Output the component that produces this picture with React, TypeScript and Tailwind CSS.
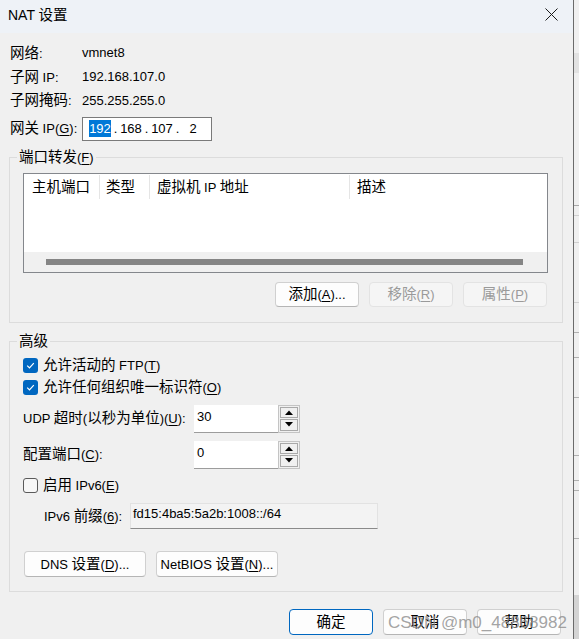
import React from 'react';

// CJK runs are set a little larger than the Latin text around them
const CJK_RUN = /([\u3000-\u9fff\uff00-\uffef]+)/;

function Key({ s }: { s: string }) {
  const i = s.indexOf('&');
  if (i < 0) return <span>{s}</span>;
  return (
    <span>
      {s.slice(0, i)}
      <span className="underline underline-offset-2">{s[i + 1]}</span>
      {s.slice(i + 2)}
    </span>
  );
}

function Txt({ s }: { s: string }) {
  return (
    <span>
      {s
        .split(CJK_RUN)
        .filter(Boolean)
        .map((part, i) =>
          CJK_RUN.test(part) ? (
            <span key={i} className="text-[14.5px]">
              {part}
            </span>
          ) : (
            <Key key={i} s={part} />
          ),
        )}
    </span>
  );
}

type BtnKind = 'normal' | 'disabled' | 'primary';

function Btn({ label, kind = 'normal', wide, h25 }: { label: string; kind?: BtnKind; wide?: boolean; h25?: boolean }) {
  const tone =
    kind === 'disabled'
      ? 'border-[#e3e3e3] bg-[#f5f5f5] text-[#9a9a9a]'
      : kind === 'primary'
        ? 'border-[#0067c0] bg-[#fdfdfd]'
        : 'border-[#d0d0d0] border-b-[#b5b5b5] bg-[#fdfdfd]';
  return (
    <div
      className={`flex items-center justify-center rounded-[4px] border ${wide ? 'w-[122px]' : 'w-[84px]'} ${h25 ? 'h-[25px]' : 'h-[26px]'} ${tone}`}
    >
      <Txt s={label} />
    </div>
  );
}

function Check({ on, label }: { on?: boolean; label: string }) {
  return (
    <div className="flex h-[22px] items-center gap-[5px]">
      {on ? (
        <div className="flex h-[15px] w-[15px] items-center justify-center rounded-[3px] bg-[#0067c0]">
          <svg width="15" height="15" viewBox="0 0 15 15">
            <path d="M4.2 7.6L6.5 9.9L10.8 5.2" fill="none" stroke="#fff" strokeWidth="1.2" />
          </svg>
        </div>
      ) : (
        <div className="h-[15px] w-[15px] rounded-[3px] border border-[#5a5a5a] bg-[#f7f7f7]" />
      )}
      <Txt s={label} />
    </div>
  );
}

function Arrow({ up }: { up?: boolean }) {
  return (
    <div className="flex flex-1 items-center justify-center border border-[#a9a9a9] bg-[#f0f0f0]">
      <svg width="8" height="5" viewBox="0 0 8 5">
        <path d={up ? 'M0 5L4 0.5L8 5Z' : 'M0 0L4 4.5L8 0Z'} fill="#000" />
      </svg>
    </div>
  );
}

function Spin({ value }: { value: string }) {
  return (
    <div className="flex h-[28px]">
      <div className="w-[84px] border-b border-[#9c9c9c] bg-white pl-[3px] pt-[2px]">{value}</div>
      <div className="flex w-[22px] flex-col gap-px border border-[#c4c4c4] p-px">
        <Arrow up />
        <Arrow />
      </div>
    </div>
  );
}

function InfoRow({ label, value, h = 'h-[24px]' }: { label: string; value: string; h?: string }) {
  return (
    <div className={`flex items-center ${h}`}>
      <span className="w-[72px]">
        <Txt s={label} />
      </span>
      <span>{value}</span>
    </div>
  );
}

export default function App() {
  return (
    <div className="flex h-[639px] w-[579px] overflow-hidden bg-[#f0f0f0] font-['Liberation_Sans','Noto_Sans_CJK_SC',sans-serif] text-[13px] leading-[20px] text-black">
      <div className="relative flex w-[573px] shrink-0 flex-col">
        {/* title bar */}
        <div className="flex h-[33px] shrink-0 items-center justify-between bg-[#eef2f7] pb-[4px] pl-[8px] pr-[15px]">
          <span className="text-[14px]">
            <Txt s="NAT 设置" />
          </span>
          <svg width="13" height="13" viewBox="0 0 13 13">
            <path d="M0.5 0.5L12.5 12.5M12.5 0.5L0.5 12.5" stroke="#1a1a1a" strokeWidth="1" />
          </svg>
        </div>

        <div className="flex flex-col pl-[9px] pr-[10px]">
          <div className="mt-[8px] flex flex-col pl-[1px]">
            <InfoRow label="网络:" value="vmnet8" />
            <InfoRow label="子网 IP:" value="192.168.107.0" />
            <InfoRow label="子网掩码:" value="255.255.255.0" h="h-[23px]" />
            <div className="mt-[4px] flex h-[25px] items-center">
              <span className="w-[72px]">
                <Txt s="网关 IP(&G):" />
              </span>
              <div className="flex h-[24px] w-[130px] items-center border border-[#7a7a7a] bg-white pl-[5px]">
                <span className="w-[24px] text-center">
                  <span className="bg-[#0078d7] py-[1px] text-white">192</span>
                </span>
                <span className="w-[7px] text-center">.</span>
                <span className="w-[24px] text-center">168</span>
                <span className="w-[7px] text-center">.</span>
                <span className="w-[24px] text-center">107</span>
                <span className="w-[7px] text-center">.</span>
                <span className="w-[24px] text-center">2</span>
              </div>
            </div>
          </div>

          {/* port forwarding */}
          <fieldset className="mt-[6px] border border-[#dcdcdc] pb-[15px] pl-[7px] pr-[8px]">
            <legend className="px-[2px]">
              <Txt s="端口转发(&F)" />
            </legend>
            <div className="flex flex-col px-[6px]">
              <div className="mt-[5px] flex h-[100px] flex-col border border-[#84878c] bg-white">
                <div className="flex h-[25px] pt-[1px]">
                  <div className="flex w-[76px] items-center border-r border-[#e5e5e5] pl-[8px]">
                    <Txt s="主机端口" />
                  </div>
                  <div className="flex w-[50px] items-center border-r border-[#e5e5e5] pl-[6px]">
                    <Txt s="类型" />
                  </div>
                  <div className="flex w-[200px] items-center border-r border-[#e5e5e5] pl-[7px]">
                    <Txt s="虚拟机 IP 地址" />
                  </div>
                  <div className="flex items-center pl-[7px]">
                    <Txt s="描述" />
                  </div>
                </div>
                <div className="flex-1" />
                <div className="flex h-[20px] items-center bg-[#f0f0f0] pl-[22px] pr-[24px]">
                  <div className="h-[6px] flex-1 bg-[#858585]" />
                </div>
              </div>
              <div className="mt-[9px] flex justify-end gap-[10px] pr-[1px]">
                <Btn label="添加(&A)..." h25 />
                <Btn label="移除(&R)" kind="disabled" h25 />
                <Btn label="属性(&P)" kind="disabled" h25 />
              </div>
            </div>
          </fieldset>

          {/* advanced */}
          <fieldset className="mt-[8px] border border-[#dcdcdc] pb-[14px] pl-[7px] pr-[8px]">
            <legend className="px-[2px]">
              <Txt s="高级" />
            </legend>
            <div className="flex flex-col px-[6px]">
              <div className="mt-[2px]">
                <Check on label="允许活动的 FTP(&T)" />
                <Check on label="允许任何组织唯一标识符(&O)" />
              </div>
              <div className="mt-[6px] flex h-[29px] items-center">
                <span className="w-[171px]">
                  <Txt s="UDP 超时(以秒为单位)(&U):" />
                </span>
                <Spin value="30" />
              </div>
              <div className="mt-[7px] flex h-[29px] items-center">
                <span className="w-[171px]">
                  <Txt s="配置端口(&C):" />
                </span>
                <Spin value="0" />
              </div>
              <div className="mt-[5px]">
                <Check label="启用 IPv6(&E)" />
              </div>
              <div className="mt-[7px] flex h-[26px] items-center pl-[21px]">
                <span className="w-[86px]">
                  <Txt s="IPv6 前缀(&6):" />
                </span>
                <div className="h-[26px] w-[248px] border border-[#e2e2e2] border-b-[#8a8a8a] bg-[#f3f3f3] pl-[2px]">
                  fd15:4ba5:5a2b:1008::/64
                </div>
              </div>
              <div className="mt-[22px] flex gap-[10px] pl-[1px]">
                <Btn label="DNS 设置(&D)..." wide />
                <Btn label="NetBIOS 设置(&N)..." wide />
              </div>
            </div>
          </fieldset>

          <div className="mr-[2px] mt-[17px] flex justify-end gap-[10px]">
            <Btn label="确定" kind="primary" />
            <Btn label="取消" />
            <Btn label="帮助" />
          </div>
        </div>

        <span className="pointer-events-none absolute left-[388px] top-[613px] text-[17px] leading-[20px] text-[#8c8c8c]/80">
          CSDN @m0_48868982
        </span>
      </div>

      {/* window behind the dialog */}
      <div className="w-px shrink-0 bg-[#6b6b6b]" />
      <div className="flex w-[5px] shrink-0 flex-col">
        <div className="h-[53px]" />
        <div className="h-[20px] bg-[#e2e2e2]" />
        <div className="h-[132px]" />
        <div className="h-[10px] border-t border-[#a8a8a8]" />
        <div className="h-[27px] border-t border-[#d0d0d0]" />
        <div className="h-[60px] border-t border-[#d0d0d0]" />
        <div className="h-[30px] border-t border-[#d0d0d0]" />
        <div className="h-[25px] border-t border-[#b0b0b0]" />
        <div className="h-[40px] border-t border-[#b0b0b0]" />
        <div className="h-[58px] border-t border-[#b0b0b0]" />
        <div className="h-[25px] border-t border-[#b0b0b0]" />
        <div className="h-[10px] border-t border-[#b0b0b0]" />
        <div className="h-[48px] border-t border-[#b0b0b0]" />
        <div className="h-[57px] border-t border-[#b0b0b0]" />
        <div className="flex-1 bg-[#d4d4d4]" />
      </div>
    </div>
  );
}
